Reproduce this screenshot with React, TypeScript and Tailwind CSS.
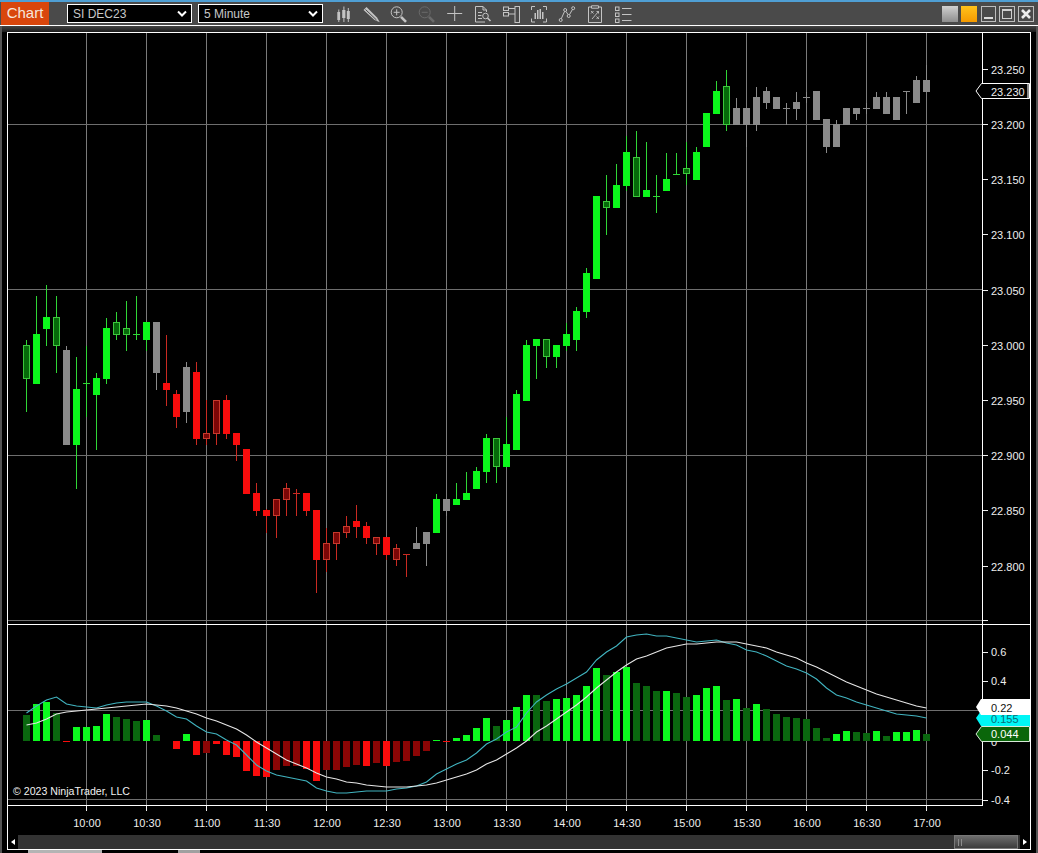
import React from "react";

type C = [string, number, number, number, number];
const candles: C[] = [
  ["g",340,345,379,412],["G",296,334,384,384],["G",285,317,329,346],["g",296,317,346,373],["N",346,350,445,445],
  ["G",357,389,445,489],["G",346,383,383,417],["G",373,378,395,450],["G",318,328,379,384],["g",312,322,335,340],
  ["g",301,328,335,351],["G",296,334,334,340],["G",322,322,340,351],["N",322,322,373,390],["R",335,383,390,406],
  ["R",390,394,417,428],["N",362,367,412,423],["R",362,372,439,445],["r",400,433,439,445],["r",400,400,434,445],
  ["R",395,400,434,439],["R",433,433,445,461],["R",449,449,494,494],["R",483,493,511,516],["R",509,510,516,533],
  ["r",499,499,516,538],["r",483,488,500,516],["R",489,493,493,516],["R",493,493,511,516],["R",510,510,560,593],
  ["r",528,543,560,572],["r",532,532,544,560],["r",516,526,533,538],["R",505,521,527,538],["R",522,526,538,544],
  ["r",537,537,544,555],["R",537,537,555,560],["r",544,548,560,566],["R",554,554,554,577],["N",527,543,549,549],
  ["N",532,532,544,566],["G",494,499,533,533],["N",499,499,511,516],["G",483,499,505,505],["G",472,493,500,500],
  ["G",467,471,489,489],["G",434,438,472,483],["g",438,438,467,483],["G",417,444,467,467],["G",390,394,450,450],
  ["G",340,345,401,401],["G",339,339,346,379],["g",339,339,357,368],["G",345,345,357,368],["G",323,334,346,351],
  ["G",307,311,340,351],["G",268,273,312,318],["G",196,196,279,279],["g",175,201,208,235],["G",164,185,208,208],
  ["G",136,152,186,191],["g",131,157,197,197],["G",142,190,197,197],["G",175,196,196,213],["G",153,179,191,191],
  ["G",153,174,174,174],["g",142,168,174,185],["G",147,152,180,180],["G",113,113,147,147],["G",81,91,114,114],
  ["g",70,86,125,131],["N",98,108,125,125],["N",108,108,125,147],["N",87,97,125,131],["N",87,91,103,109],
  ["N",97,97,109,109],["N",103,108,108,125],["N",92,102,109,120],["N",92,97,97,103],["N",91,91,120,120],
  ["N",119,119,147,153],["N",120,124,147,147],["N",108,108,125,125],["N",108,108,114,120],["N",103,108,108,114],
  ["N",92,97,109,109],["N",92,97,114,114],["N",97,97,120,120],["N",91,91,91,114],["N",76,80,103,103],["N",65,80,92,92],
];

const hist: [number, string][] = [
  [715,"D"],[704,"B"],[702,"B"],[713,"D"],[742,"R"],[727,"B"],[727,"B"],[726,"B"],[714,"B"],[717,"D"],
  [719,"D"],[721,"D"],[720,"B"],[735,"D"],[741,"D"],[749,"R"],[734,"B"],[755,"R"],[753,"K"],[744,"R"],
  [755,"R"],[757,"R"],[771,"R"],[776,"R"],[777,"R"],[770,"K"],[766,"K"],[766,"K"],[769,"R"],[781,"R"],
  [770,"K"],[770,"K"],[767,"K"],[765,"K"],[766,"R"],[763,"K"],[766,"R"],[762,"K"],[761,"K"],[756,"K"],
  [751,"K"],[740,"B"],[742,"R"],[738,"B"],[735,"B"],[728,"B"],[718,"B"],[726,"D"],[720,"B"],[707,"B"],
  [695,"B"],[695,"D"],[701,"D"],[699,"B"],[698,"B"],[695,"B"],[686,"B"],[668,"B"],[675,"D"],[672,"B"],
  [667,"B"],[683,"D"],[686,"D"],[691,"D"],[691,"B"],[693,"D"],[697,"D"],[695,"B"],[688,"B"],[686,"B"],
  [700,"D"],[699,"B"],[708,"D"],[704,"B"],[709,"D"],[714,"D"],[717,"D"],[718,"D"],[719,"D"],[728,"D"],
  [738,"D"],[734,"B"],[731,"B"],[732,"D"],[733,"D"],[731,"B"],[736,"D"],[732,"B"],[732,"B"],[730,"B"],[734,"D"],
];

const teal = [713,706,700,697,704,706,707,708,705,703,702,702,702,706,711,717,719,726,732,734,740,745,755,765,771,775,777,779,781,788,791,793,793,792,791,791,791,789,788,786,782,774,769,764,760,753,744,739,732,727,713,702,695,689,684,678,672,660,652,646,637,635,634,636,636,638,640,642,641,640,643,645,650,652,656,661,666,669,673,679,688,695,698,702,705,708,711,714,715,716,718];
const white = [725,723,719,714,712,711,710,709,708,707,706,705,704,705,706,708,711,714,718,721,725,729,735,742,748,754,760,764,768,773,777,779,782,783,785,786,787,787,787,786,785,783,780,777,774,770,764,760,754,748,741,732,726,719,712,705,697,688,680,672,665,659,656,652,648,646,644,644,643,642,642,642,644,646,648,652,655,658,663,667,672,677,682,686,690,694,697,700,703,706,708];

const grids = Array.from({ length: 15 }, (_, k) => 86 + 60 * k);
const times = ["10:00","10:30","11:00","11:30","12:00","12:30","13:00","13:30","14:00","14:30","15:00","15:30","16:00","16:30","17:00"];
const prices = ["23.250","23.200","23.150","23.100","23.050","23.000","22.950","22.900","22.850","22.800"];

const toPts = (a: number[]) => a.map((y, i) => `${26.5 + 10 * i},${y}`).join(" ");

function Candle({ c, i }: { c: C; i: number }) {
  const [t, wt, bt, bb, wb] = c;
  const x = 23 + 10 * i;
  const main = t === "G" || t === "g" ? "#0bf71b" : t === "R" || t === "r" ? "#f80c0c" : "#8a8a8a";
  const wick = t === "G" || t === "g" ? "#2fd636" : t === "R" || t === "r" ? "#c92a22" : "#8a8a8a";
  if (bt === bb) {
    return (
      <g>
        <rect x={x + 3} y={wt} width={1} height={wb - wt} fill={wick} />
        <rect x={x} y={bt} width={7} height={1} fill={wick} />
      </g>
    );
  }
  return (
    <g>
      <rect x={x + 3} y={wt} width={1} height={wb - wt} fill={wick} />
      {t === "g" || t === "r" ? (
        <rect x={x + 0.5} y={bt + 0.5} width={6} height={bb - bt - 1} fill={t === "g" ? "#066a0a" : "#7c0606"} stroke={t === "g" ? "#3cc83c" : "#c8382c"} strokeWidth={1} />
      ) : (
        <rect x={x} y={bt} width={7} height={bb - bt} fill={main} />
      )}
    </g>
  );
}

const histColor: Record<string, string> = { B: "#0cfa1e", D: "#0a660f", R: "#fa0c0c", K: "#8b0505" };

function PricePanel() {
  return (
    <svg className="block w-[1022px] h-[591px] shrink-0" viewBox="8 33 1022 591">
      <g shapeRendering="crispEdges">
        {grids.map((x) => <rect key={x} x={x} y={33} width={1} height={591} fill="#7a7a7a" />)}
        {[124, 289, 455, 620].map((y) => <rect key={y} x={8} y={y} width={974} height={1} fill="#6e6e6e" />)}
        {candles.map((c, i) => <Candle key={i} c={c} i={i} />)}
        <rect x={982} y={33} width={1} height={591} fill="#fff" />
        {prices.map((_, k) => <rect key={k} x={983} y={Math.round(68.8 + 55.2 * k)} width={5} height={1} fill="#eee" />)}
        <rect x={983} y={620} width={5} height={1} fill="#eee" />
      </g>
      {prices.map((p, k) => (
        <text key={p} x={991} y={Math.round(68.8 + 55.2 * k) + 5} className="fill-[#eeeeee] text-[11px]">{p}</text>
      ))}
      <polygon points="1029.5,83.5 981.5,83.5 976,91 981.5,98.5 1029.5,98.5" fill="#000" stroke="#fff" strokeWidth={1} />
      <rect x={1027} y={84} width={2} height={14} fill="#8a8a8a" />
      <text x={991} y={96} className="fill-[#eeeeee] text-[11px]">23.230</text>
    </svg>
  );
}

function IndicatorPanel() {
  return (
    <svg className="block w-[1022px] h-[210px] shrink-0" viewBox="8 625 1022 210">
      <g shapeRendering="crispEdges">
        {grids.map((x) => <rect key={x} x={x} y={625} width={1} height={180} fill="#7a7a7a" />)}
        {[710, 799].map((y) => <rect key={y} x={8} y={y} width={974} height={1} fill="#6e6e6e" />)}
        {hist.map(([y, k], i) => (
          <rect key={i} x={23 + 10 * i} y={Math.min(y, 741)} width={7} height={Math.abs(y - 741)} fill={histColor[k]} />
        ))}
        <rect x={982} y={625} width={1} height={181} fill="#fff" />
        <rect x={8} y={805} width={975} height={1} fill="#fff" />
        {grids.map((x) => <rect key={x} x={x} y={806} width={1} height={5} fill="#eee" />)}
        {[652, 681, 770, 800].map((y) => <rect key={y} x={983} y={y} width={5} height={1} fill="#eee" />)}
      </g>
      <polyline points={toPts(teal)} fill="none" stroke="#41b4c0" strokeWidth={1.1} />
      <polyline points={toPts(white)} fill="none" stroke="#e6e6e6" strokeWidth={1.1} />
      <text x={13} y={795} className="fill-[#f0f0f0] text-[10.6px]">© 2023 NinjaTrader, LLC</text>
      {times.map((t, k) => (
        <text key={t} x={87 + 60 * k} y={827} textAnchor="middle" className="fill-[#eeeeee] text-[11px]">{t}</text>
      ))}
      {[["0.6", 656], ["0.4", 685], ["-0.2", 774], ["-0.4", 804], ["0", 746]].map(([l, y]) => (
        <text key={l} x={991} y={y} className="fill-[#eeeeee] text-[11px]">{l}</text>
      ))}
      <polygon points="1030,711 981,711 976,718 981,726 1030,726" fill="#00f6f6" />
      <text x={991} y={723} className="fill-[#0a6b75] text-[11px]">0.155</text>
      <polygon points="1030,699 981,699 976,707 981,715 1030,715" fill="#fff" />
      <text x={991} y={712} className="fill-[#111] text-[11px]">0.22</text>
      <polygon points="1029.5,726.5 981.5,726.5 976,734 981.5,741.5 1029.5,741.5" fill="#0a660a" stroke="#d8e8d8" strokeWidth={1} />
      <text x={991} y={738} className="fill-[#ffffff] text-[11px]">0.044</text>
    </svg>
  );
}

function Icon({ children }: { children: React.ReactNode }) {
  return (
    <svg className="block w-5 h-5 shrink-0" viewBox="0 0 20 20" fill="none" stroke="#c4c4c4" strokeWidth={1}>
      {children}
    </svg>
  );
}

function Toolbar() {
  return (
    <div className="flex h-[26px] shrink-0 border-t-2 border-b border-t-[#4f9fd4] border-b-white bg-[#4a4a4a]">
      <div className="ml-px w-12 flex items-center justify-center bg-[#d9460c] text-[15px] text-[#f6e6dc]">Chart</div>
      {["SI DEC23", "5 Minute"].map((s, i) => (
        <div key={s} className={`${i === 0 ? "ml-[18px]" : "ml-[6px]"} my-[2px] w-[125px] flex items-center justify-between pl-[5px] pr-[3px] bg-black border border-white text-[12px] text-[#c8c8c8]`}>
          <span>{s}</span>
          <svg className="block w-3 h-3" viewBox="0 0 12 12" fill="none" stroke="#fff" strokeWidth={2}>
            <path d="M2 3.5 L6 7.5 L10 3.5" />
          </svg>
        </div>
      ))}
      <div className="ml-[11px] flex gap-2 items-start pt-[2px]">
        <Icon>
          <g fill="#c4c4c4" stroke="none">
            <rect x="3.3" y="8" width="2.8" height="8" /><rect x="4.3" y="5.5" width="1" height="12.5" />
            <rect x="8.2" y="6" width="3.2" height="8" /><rect x="9.4" y="2.5" width="1" height="15.5" />
            <rect x="12.8" y="7" width="3" height="8" /><rect x="13.8" y="4" width="1" height="14" />
          </g>
        </Icon>
        <Icon>
          <path d="M1.5 6 L4.5 3 L15 13.5 L17.8 18.2 L12.5 16 Z" fill="#c4c4c4" stroke="none" />
          <path d="M3.5 5.5 L14.5 16" stroke="#4a4a4a" />
        </Icon>
        <Icon>
          <circle cx="6.7" cy="8.3" r="5.5" />
          <path d="M3.7 8.3 H9.7 M6.7 5.3 V11.3" />
          <path d="M11 12.8 L16 17.8" strokeWidth={2.6} />
        </Icon>
        <Icon>
          <g stroke="#6a6a6a">
            <circle cx="6.7" cy="8.3" r="5.5" />
            <path d="M3.7 8.3 H9.7" />
            <path d="M11 12.8 L16 17.8" strokeWidth={2.6} />
          </g>
        </Icon>
        <Icon>
          <path d="M1.2 9.5 H16.2 M8.7 2 V17" />
        </Icon>
        <Icon>
          <path d="M9 2.5 H1.5 V18 H11 M9 2.5 L12.5 6 V8 M9 2.5 V6 H12.5" />
          <path d="M4 8.5 H8 M4 11.5 H7.5 M4 14.5 H8" />
          <circle cx="11.5" cy="12" r="2.8" />
          <path d="M13.5 14 L16.5 17" strokeWidth={1.6} />
        </Icon>
        <Icon>
          <rect x="1.5" y="3" width="5" height="3.5" />
          <rect x="1.5" y="8.5" width="5" height="3.5" />
          <path d="M6.5 4.5 H13 M6.5 10 H13" />
          <rect x="13" y="2.5" width="4.5" height="16" />
        </Icon>
        <Icon>
          <path d="M5 2.5 H1.5 V6 M13 2.5 H16.5 V6 M1.5 14.5 V18 H5 M16.5 14.5 V18 H13" />
          <g fill="#c4c4c4" stroke="none">
            <rect x="4.5" y="9" width="1.5" height="6" /><rect x="7" y="6" width="1.5" height="9" />
            <rect x="9.5" y="5" width="1.5" height="10" /><rect x="12" y="8" width="1.5" height="7" />
          </g>
        </Icon>
        <Icon>
          <path d="M3.3 14.6 L6.6 7.4 M8 7.4 L10 10.6 M11.5 10.6 L14.4 5.6" />
          <circle cx="2.7" cy="16" r="1.5" /><circle cx="7.2" cy="6" r="1.5" /><circle cx="10.7" cy="12" r="1.5" /><circle cx="15.2" cy="4.2" r="1.5" />
        </Icon>
        <Icon>
          <path d="M5.5 3 H2.5 V18.5 H15.5 V3 H12.5 M5.5 1.8 H12.5 V4.2 H5.5 Z" />
          <path d="M5 7 L7.5 9.5 M7.5 7 L5 9.5 M10.5 12.5 L13 15 M13 12.5 L10.5 15 M6 15 L12.5 7.5 M10.5 7.5 H12.5 V9.5" strokeWidth={0.9} />
        </Icon>
        <Icon>
          <rect x="1.5" y="3" width="3.5" height="3.5" />
          <rect x="1.5" y="9" width="3.5" height="3.5" />
          <rect x="1.5" y="15" width="3.5" height="3.5" />
          <path d="M8 4.5 H17.5 M8 10.5 H17.5 M8 16.5 H17.5" />
        </Icon>
      </div>
      <div className="ml-auto mr-[4px] flex items-center">
        <div className="w-4 h-4 bg-linear-to-b from-[#d0d0d0] to-[#8e8e8e]"></div>
        <div className="ml-[3px] w-4 h-4 bg-linear-to-b from-[#ffc21a] to-[#f59a00]"></div>
        <div className="ml-[4px] w-[15px] h-4 border border-[#bdbdbd] flex items-end justify-center pb-[2px]">
          <div className="w-[9px] h-[2px] bg-[#dcdcdc]"></div>
        </div>
        <div className="ml-[3px] w-4 h-4 border border-[#bdbdbd] p-[2px]">
          <div className="w-full h-full border border-t-2 border-[#cfcfcf]"></div>
        </div>
        <div className="ml-[3px] w-4 h-4 border border-[#bdbdbd] flex items-center justify-center">
          <svg className="block w-3 h-3" viewBox="0 0 12 12" stroke="#eee" strokeWidth={2.6}>
            <path d="M2 2 L10 10 M10 2 L2 10" />
          </svg>
        </div>
      </div>
    </div>
  );
}

function Scrollbar() {
  return (
    <div className="h-[14px] shrink-0 flex justify-between bg-[#333333]">
      <div className="w-[10px] bg-black flex items-center justify-center">
        <svg className="block w-1 h-[6px]" viewBox="0 0 4 6" fill="#fff"><path d="M4 0 V6 L0 3 Z" /></svg>
      </div>
      <div className="flex">
        <div className="w-16 flex items-center pl-[3px] gap-[2px] border border-[#777] bg-linear-to-b from-[#6e6e6e] to-[#3c3c3c]">
          <div className="w-px h-[7px] bg-[#8c8c8c]"></div>
          <div className="w-px h-[7px] bg-[#8c8c8c]"></div>
        </div>
        <div className="ml-[2px] w-[10px] bg-black flex items-center justify-center">
          <svg className="block w-1 h-[6px]" viewBox="0 0 4 6" fill="#fff"><path d="M0 0 V6 L4 3 Z" /></svg>
        </div>
      </div>
    </div>
  );
}

export default function App() {
  return (
    <div className="w-[1038px] h-[853px] overflow-hidden flex flex-col bg-black font-['Liberation_Sans',Arial,sans-serif]">
      <Toolbar />
      <div className="flex-1 flex flex-col border-x-2 border-[#555555]">
        <div className="h-[6px] shrink-0 bg-linear-to-b from-[#454545] to-[#1c1c1c]"></div>
        <div className="mx-[5px] h-[818px] shrink-0 flex flex-col border border-white bg-black">
          <PricePanel />
          <div className="h-px shrink-0 bg-white"></div>
          <IndicatorPanel />
          <Scrollbar />
        </div>
        <div className="h-[3px] flex pl-[26px]">
          <div className="w-[74px] bg-[#b4b4b4]"></div>
          <div className="ml-[76px] w-[22px] bg-[#a0a0a0]"></div>
        </div>
      </div>
    </div>
  );
}
